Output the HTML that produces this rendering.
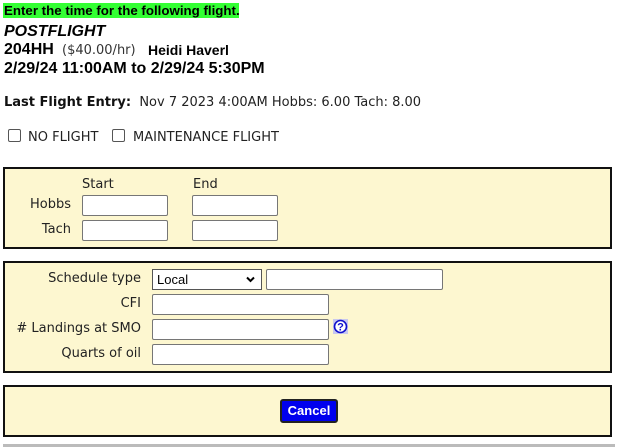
<!DOCTYPE html>
<html><head><style>
body{margin:0;width:620px;height:447px;background:#fff;position:relative;overflow:hidden;font-family:"DejaVu Sans",Verdana,sans-serif;font-size:13px;color:#222}
.a{position:absolute;white-space:nowrap}
.ar{font-family:"Liberation Sans",Arial,sans-serif;font-weight:bold;color:#000}
.box{position:absolute;left:3px;width:609px;background:#fdf7d0;border:2px solid #111;box-sizing:border-box}
.in{position:absolute;background:#fff;border:1px solid #767676;border-radius:2px;box-sizing:border-box;height:21px}
.cb{position:absolute;width:11px;height:11px;border:1px solid #555;border-radius:2px;background:#fff}
.r{text-align:right}
</style></head><body>
<div class="a ar" style="left:3px;top:3px;height:15px;width:236px;background:#33ff33;font-size:13.3px;line-height:15px;padding-left:1px;box-sizing:border-box">Enter the time for the following flight.</div>
<div class="a ar" style="left:4px;top:23px;font-size:16px;font-style:italic">POSTFLIGHT</div>
<div class="a ar" style="left:4px;top:41px;font-size:16px">204HH</div>
<div class="a" style="left:62px;top:43px;font-size:13px;color:#333">($40.00/hr)</div>
<div class="a ar" style="left:148px;top:42px;font-size:14px">Heidi Haverl</div>
<div class="a ar" style="left:4px;top:60px;font-size:16px">2/29/24 11:00AM to 2/29/24 5:30PM</div>
<div class="a" style="left:4px;top:95px;font-size:13px"><b style="color:#111">Last Flight Entry:</b>&nbsp; Nov 7 2023 4:00AM Hobbs: 6.00 Tach: 8.00</div>
<div class="cb" style="left:8px;top:129px"></div>
<div class="a" style="left:28px;top:130px">NO FLIGHT</div>
<div class="cb" style="left:112px;top:129px"></div>
<div class="a" style="left:133px;top:130px">MAINTENANCE FLIGHT</div>

<div class="box" style="top:167px;height:82px"></div>
<div class="a" style="left:82px;top:177px">Start</div>
<div class="a" style="left:193px;top:177px">End</div>
<div class="a r" style="left:20px;width:51px;top:197px">Hobbs</div>
<div class="a r" style="left:20px;width:51px;top:222px">Tach</div>
<div class="in" style="left:82px;top:195px;width:86px"></div>
<div class="in" style="left:192px;top:195px;width:86px"></div>
<div class="in" style="left:82px;top:220px;width:86px"></div>
<div class="in" style="left:192px;top:220px;width:86px"></div>

<div class="box" style="top:261px;height:112px"></div>
<div class="a r" style="left:10px;width:131px;top:271px">Schedule type</div>
<div class="a r" style="left:10px;width:131px;top:296px">CFI</div>
<div class="a r" style="left:10px;width:131px;top:321px"># Landings at SMO</div>
<div class="a r" style="left:10px;width:131px;top:346px">Quarts of oil</div>
<div class="in" style="left:152px;top:269px;width:110px;border-radius:0;border-color:#555;font-family:'Liberation Sans',Arial,sans-serif;font-size:13px;line-height:19px;padding-left:4px;color:#000">Local<svg style="position:absolute;right:6px;top:6px" width="9" height="7" viewBox="0 0 9 7"><path d="M1 1.5L4.5 5L8 1.5" stroke="#000" stroke-width="2" fill="none"/></svg></div>
<div class="in" style="left:266px;top:269px;width:177px"></div>
<div class="in" style="left:152px;top:294px;width:177px"></div>
<div class="in" style="left:152px;top:319px;width:177px"></div>
<div class="in" style="left:152px;top:344px;width:177px"></div>
<div class="a" style="left:333px;top:319px;width:15px;height:15px;background:#c8c8ee"><svg width="15" height="15" viewBox="0 0 15 15"><circle cx="7.5" cy="7.5" r="6" fill="#fff" stroke="#1010cc" stroke-width="1.6"/><text x="7.5" y="11.5" text-anchor="middle" font-family="Liberation Sans" font-weight="bold" font-size="11" fill="#1010cc">?</text></svg></div>

<div class="box" style="top:385px;height:52px"></div>
<div class="a" style="left:280px;top:399px;width:58px;height:24px;background:#0000ee;border:2px solid #222;border-radius:3px;box-sizing:border-box;color:#fff;font-family:'Liberation Sans',Arial,sans-serif;font-weight:bold;font-size:13px;text-align:center;line-height:20px">Cancel</div>
<div class="a" style="left:3px;top:444px;width:612px;height:3px;background:#bbb"></div>
</body></html>
